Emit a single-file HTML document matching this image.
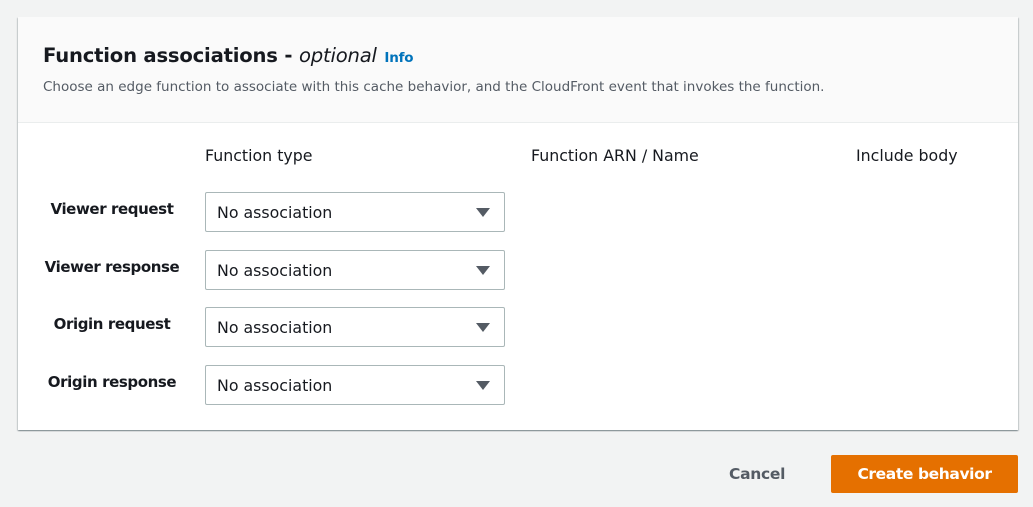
<!DOCTYPE html>
<html><head><style>
body{margin:0;width:1033px;height:507px;background:#f2f3f3;font-family:"DejaVu Sans","Liberation Sans",sans-serif;position:relative;overflow:hidden;color:#16191f}
.card{position:absolute;left:18px;top:17px;width:1000px;height:413px;background:#fff;box-shadow:0 1px 1px rgba(0,28,36,.3),1px 1px 1px rgba(0,28,36,.15),-1px 1px 1px rgba(0,28,36,.15)}
.hdr{height:105px;background:#fafafa;border-bottom:1px solid #eaeded;position:relative}
.t{position:absolute;left:25px;top:27px;font-size:19.6px;font-weight:bold;letter-spacing:-0.2px}
.t i{font-weight:normal;font-style:italic}
.t span{color:#0073bb;font-size:13.5px;margin-left:1px}
.s{position:absolute;left:25px;top:62px;font-size:13.5px;color:#545b64}
.a{position:absolute;font-size:15.8px}
.l{position:absolute;font-size:15px;font-weight:bold;width:180px;text-align:center;left:22px;letter-spacing:-0.4px}
.sel{position:absolute;left:205px;width:298px;height:38px;border:1px solid #aab7b8;border-radius:2px;background:#fff}
.sel span{position:absolute;left:11px;top:10px;font-size:15.8px}
.sel b{position:absolute;right:14px;top:15px;width:0;height:0;border-left:7px solid transparent;border-right:7px solid transparent;border-top:9px solid #545b64}
.btn{position:absolute;left:831px;top:455px;width:187px;height:38px;background:#e57000;border-radius:2px;color:#fff;font-weight:bold;font-size:15.5px;text-align:center;line-height:38px;letter-spacing:-0.4px}
.cancel{position:absolute;left:729px;top:465px;font-weight:bold;font-size:15.5px;color:#545b64;letter-spacing:-0.3px}
</style></head><body>
<div class="card"><div class="hdr">
<div class="t">Function associations - <i>optional</i> <span>Info</span></div>
<div class="s">Choose an edge function to associate with this cache behavior, and the CloudFront event that invokes the function.</div>
</div></div>
<div class="a" style="left:205px;top:146px">Function type</div>
<div class="a" style="left:531px;top:146px">Function ARN / Name</div>
<div class="a" style="left:856px;top:146px">Include body</div>
<div class="l" style="top:200px">Viewer request</div>
<div class="l" style="top:258px">Viewer response</div>
<div class="l" style="top:315px">Origin request</div>
<div class="l" style="top:373px">Origin response</div>
<div class="sel" style="top:192px"><span>No association</span><b></b></div>
<div class="sel" style="top:250px"><span>No association</span><b></b></div>
<div class="sel" style="top:307px"><span>No association</span><b></b></div>
<div class="sel" style="top:365px"><span>No association</span><b></b></div>
<div class="cancel">Cancel</div>
<div class="btn">Create behavior</div>
</body></html>
